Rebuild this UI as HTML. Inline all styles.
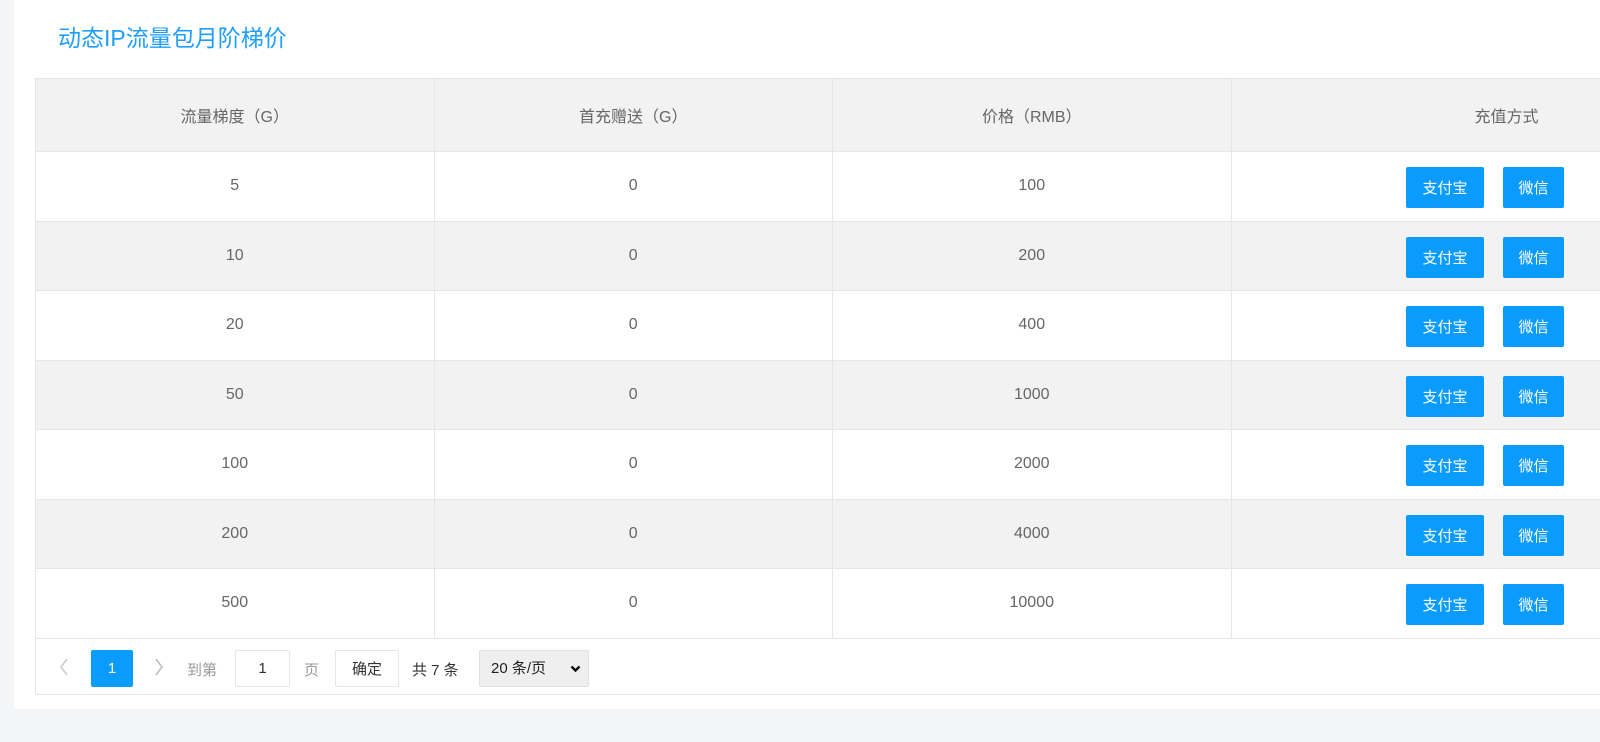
<!DOCTYPE html>
<html><head><meta charset="utf-8"><style>
*{margin:0;padding:0;box-sizing:border-box}
body{width:1600px;height:742px;overflow:hidden;background:#f4f5f7;font-family:"Liberation Sans","Noto Sans CJK SC",sans-serif;color:#666;position:relative}
.panel{position:absolute;left:14px;top:0;width:1600px;height:709px;background:#fff;border-radius:0 0 4px 4px}
.title{position:absolute;left:58px;top:22px;font-size:23px;color:#1e9fff;line-height:32px}
.tbl{position:absolute;left:35px;top:78px;width:1700px;border:1px solid #e6e6e6;border-right:none}
.row{display:flex;height:69.5px;border-top:1px solid #e6e6e6;font-size:16px;position:relative}
.row:first-child{border-top:none;height:72px}
.row.g{background:#f2f2f2}
.c{flex:0 0 398.5px;border-right:1px solid #e6e6e6;display:flex;align-items:center;justify-content:center}
.c:nth-child(4){flex:0 0 600px;border-right:none;justify-content:flex-start}
.btn{position:absolute;top:15px;height:41px;background:#0a9bfd;color:#fff;border-radius:2px;font-size:15px;display:flex;align-items:center;justify-content:center}
.b1{left:1370px;width:78px}.b2{left:1467px;width:61px}
.pg{height:56px;border-top:1px solid #e6e6e6;position:relative;font-size:15px}
.pg span,.pg div{position:absolute}
</style></head><body>
<div class="panel"></div>
<div class="title">动态IP流量包月阶梯价</div>
<div class="tbl">
<div class="row g"><div class="c">流量梯度（G）</div><div class="c">首充赠送（G）</div><div class="c">价格（RMB）</div><div class="c" style="padding-left:243px">充值方式</div></div>
<div class="row"><div class="c">5</div><div class="c">0</div><div class="c">100</div><div class="c"></div><div class="btn b1">支付宝</div><div class="btn b2">微信</div></div>
<div class="row g"><div class="c">10</div><div class="c">0</div><div class="c">200</div><div class="c"></div><div class="btn b1">支付宝</div><div class="btn b2">微信</div></div>
<div class="row"><div class="c">20</div><div class="c">0</div><div class="c">400</div><div class="c"></div><div class="btn b1">支付宝</div><div class="btn b2">微信</div></div>
<div class="row g"><div class="c">50</div><div class="c">0</div><div class="c">1000</div><div class="c"></div><div class="btn b1">支付宝</div><div class="btn b2">微信</div></div>
<div class="row"><div class="c">100</div><div class="c">0</div><div class="c">2000</div><div class="c"></div><div class="btn b1">支付宝</div><div class="btn b2">微信</div></div>
<div class="row g"><div class="c">200</div><div class="c">0</div><div class="c">4000</div><div class="c"></div><div class="btn b1">支付宝</div><div class="btn b2">微信</div></div>
<div class="row"><div class="c">500</div><div class="c">0</div><div class="c">10000</div><div class="c"></div><div class="btn b1">支付宝</div><div class="btn b2">微信</div></div>
<div class="pg">
<svg style="position:absolute;left:23px;top:19px" width="10" height="18" viewBox="0 0 10 18"><path d="M8 1L2 9l6 8" fill="none" stroke="#ccc" stroke-width="1.5"/></svg>
<div style="left:55px;top:11px;width:42px;height:37px;background:#0a9bfd;color:#fff;border-radius:2px;display:flex;align-items:center;justify-content:center">1</div>
<svg style="position:absolute;left:118px;top:19px" width="10" height="18" viewBox="0 0 10 18"><path d="M2 1l6 8-6 8" fill="none" stroke="#bbb" stroke-width="1.5"/></svg>
<span style="left:151px;top:20px;color:#999">到第</span>
<div style="left:199px;top:11px;width:55px;height:37px;border:1px solid #e6e6e6;border-radius:2px;display:flex;align-items:center;justify-content:center;color:#333">1</div>
<span style="left:268px;top:20px;color:#999">页</span>
<div style="left:299px;top:11px;width:64px;height:37px;border:1px solid #e6e6e6;border-radius:2px;display:flex;align-items:center;justify-content:center;color:#333">确定</div>
<span style="left:376px;top:20px;color:#333">共 7 条</span>
<div style="left:443px;top:11px;width:110px;height:37px;background:#efefef;border:1px solid #e0e0e0;border-radius:2px;color:#222;padding-left:11px;line-height:35px">20 条/页
<svg style="position:absolute;left:90px;top:14px" width="11" height="8" viewBox="0 0 11 8"><path d="M1.5 1.5l4 4 4-4" fill="none" stroke="#111" stroke-width="2.4"/></svg></div>
</div>
</div>
</body></html>
